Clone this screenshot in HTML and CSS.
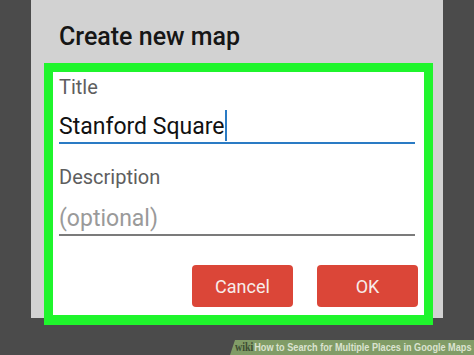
FILE: index.html
```html
<!DOCTYPE html>
<html lang="en">
<head>
    <meta charset="UTF-8">
    <meta name="viewport" content="width=device-width, initial-scale=1.0">
    <title>Create new map</title>
    <link rel="stylesheet" href="styles.css">
</head>
<body>

    <div class="screen">
        <div class="dialog">
            <h1 class="dialog-title">Create new map</h1>

            <div class="form">
                <div class="label label-first">Title</div>
                <div class="value value-active">Stanford Square<span class="caret"></span></div>

                <div class="label label-desc">Description</div>
                <div class="value value-empty">(optional)</div>

                <div class="actions">
                    <button class="btn">Cancel</button>
                    <button class="btn">OK</button>
                </div>
            </div>
        </div>

        <div class="credit">
            <span class="credit-text"><span class="wiki">wiki</span>How to Search for Multiple Places in Google Maps</span>
        </div>
    </div>

</body>
</html>
```

FILE: styles.css
```css
body { margin: 0; background: #4b4b4b; font-family: Roboto, "Noto Sans", sans-serif; overflow: hidden; }
.screen { position: relative; width: 474px; height: 355px; overflow: hidden; }

.dialog { margin-left: 31px; width: 412px; height: 318px; background: #d2d2d2; }
.dialog-title {
    margin: 0; height: 63px; box-sizing: border-box; padding: 22px 0 0 28px;
    font-size: 25px; line-height: 30px; font-weight: 500; color: #161616;
}

.form {
    margin-left: 13px; width: 389px; height: 262px; box-sizing: border-box;
    border: 9px solid #1ff52c; border-bottom-width: 10px; background: #fff;
    padding: 3px 9px 0 6px;
}
.label { font-size: 20px; line-height: 24px; color: #5e5e5e; }
.label-desc { margin-top: 21px; }

.value { font-size: 23px; line-height: 28px; color: #111; }
.value-active { margin-top: 14px; padding-bottom: 1px; border-bottom: 2px solid #2a7bc4; }
.value-empty { margin-top: 16px; padding-bottom: 1px; border-bottom: 2px solid #7b7b7b; color: #9a9a9a; }
.caret {
    display: inline-block; width: 2px; height: 31px; margin: -3px 0 0 1px;
    vertical-align: -7px; background: #2a7bc4;
}

.actions { display: flex; justify-content: flex-end; gap: 24px; margin: 29px -3px 0 0; }
.btn {
    width: 101px; height: 42px; border: none; border-radius: 4px; padding: 0;
    background: #db4638; color: #f7ecea; font-family: Roboto, sans-serif; font-size: 18px;
}

.credit {
    position: absolute; right: 0; bottom: 0; width: 244px; height: 15px; box-sizing: border-box;
    padding-left: 5px; background: #819c67; clip-path: polygon(5px 0, 100% 0, 100% 100%, 0 100%);
    font-family: "Liberation Sans", Arial, sans-serif; font-size: 10.5px; line-height: 15px;
    font-weight: bold; color: #dbe3d0; white-space: nowrap;
}
.credit-text { display: inline-block; transform: scaleX(0.87); transform-origin: left center; }
.wiki { color: #3e4c33; font-family: "Liberation Serif", serif; font-size: 11.5px; margin-right: 1px; }
```
